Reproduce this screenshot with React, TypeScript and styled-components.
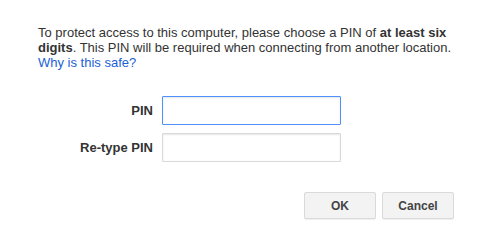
import styled, { createGlobalStyle } from 'styled-components';

const GlobalStyle = createGlobalStyle`
    body {
        margin:0;
        background:#fff;
        font-family:"Liberation Sans", Arial, sans-serif;
        font-size:13px;
        color:#333;
    }
`

const Dialog = styled.div`
    width:500px;
    height:240px;
    box-sizing:border-box;
    padding:25px 46px 0 38px;
    display:flex;
    flex-direction:column;
`

const Message = styled.p`
    margin:0;
    line-height:15px;
`

const SafeLink = styled.a`
    color:#1a5fd6;
    text-decoration:none;
    cursor:pointer;
`

const Form = styled.div`
    margin-top:26px;
    display:grid;
    grid-template-columns:115px 179px;
    column-gap:9px;
    row-gap:8px;
    align-items:center;
`

const Label = styled.label`
    text-align:right;
    font-weight:700;
    color:#333;
`

const Input = styled.input<{ $focused?: boolean }>`
    box-sizing:border-box;
    width:179px;
    height:29px;
    margin:0;
    padding:0 6px;
    font:inherit;
    border:1px solid ${props => props.$focused ? '#4d90fe' : '#d9d9d9'};
    border-radius:1px;
    box-shadow:inset 0 1px 2px rgba(0,0,0,0.1);
    outline:none;
`

const Buttons = styled.div`
    margin-top:30px;
    display:flex;
    justify-content:flex-end;
    gap:6px;
`

const Button = styled.button`
    width:72px;
    height:27px;
    margin:0;
    font-family:"Liberation Sans", Arial, sans-serif;
    font-size:12px;
    font-weight:700;
    color:#444;
    background:#f3f3f3;
    border:1px solid #dadada;
    border-radius:2px;
    box-shadow:0 1px 0 rgba(0,0,0,0.06);
`

function App(){
    return (
    <>
        <GlobalStyle />
        <Dialog>
            <Message>
                To protect access to this computer, please choose a PIN of <b>at least six digits</b>. This PIN will be required when connecting from another location.{' '}
                <SafeLink>Why is this safe?</SafeLink>
            </Message>
            <Form>
                <Label>PIN</Label>
                <Input type="password" $focused />
                <Label>Re-type PIN</Label>
                <Input type="password" />
            </Form>
            <Buttons>
                <Button>OK</Button>
                <Button>Cancel</Button>
            </Buttons>
        </Dialog>
    </>
    )
}

export default App;
